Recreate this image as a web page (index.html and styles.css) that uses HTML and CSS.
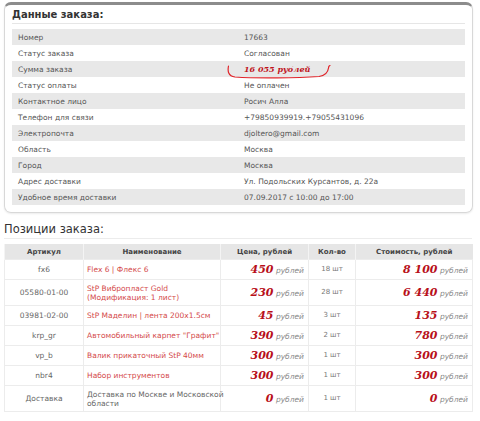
FILE: index.html
```html
<!DOCTYPE html>
<html lang="ru">
<head>
<meta charset="utf-8">
<link rel="stylesheet" href="styles.css">
</head>
<body>
<section class="order-box">
  <h2 class="box-title">Данные заказа:</h2>
  <div class="info">
    <div class="row"><span class="lbl">Номер</span><span class="val">17663</span></div>
    <div class="row"><span class="lbl">Статус заказа</span><span class="val">Согласован</span></div>
    <div class="row"><span class="lbl">Сумма заказа</span><span class="val sum">16 055 рублей
      <svg class="scribble" width="110" height="16" viewBox="0 0 110 16"><path d="M1.5 1 C 0.5 6, 1 11, 8 12 C 30 13.5, 70 13, 92 11.5 C 99 10.5, 101 7, 101.5 3 C 101.5 1.5, 102 0.8, 103 0.5" fill="none" stroke="#e0242a" stroke-width="1.2" stroke-linecap="round"/></svg>
    </span></div>
    <div class="row"><span class="lbl">Статус оплаты</span><span class="val">Не оплачен</span></div>
    <div class="row"><span class="lbl">Контактное лицо</span><span class="val">Росич Алла</span></div>
    <div class="row"><span class="lbl">Телефон для связи</span><span class="val">+79850939919.+79055431096</span></div>
    <div class="row"><span class="lbl">Электропочта</span><span class="val">djoltero@gmail.com</span></div>
    <div class="row"><span class="lbl">Область</span><span class="val">Москва</span></div>
    <div class="row"><span class="lbl">Город</span><span class="val">Москва</span></div>
    <div class="row"><span class="lbl">Адрес доставки</span><span class="val">Ул. Подольских Курсантов, д. 22а</span></div>
    <div class="row"><span class="lbl">Удобное время доставки</span><span class="val">07.09.2017 с 10:00 до 17:00</span></div>
  </div>
</section>

<h2 class="items-title">Позиции заказа:</h2>
<table class="items">
  <colgroup><col class="c1"><col class="c2"><col class="c3"><col class="c4"><col class="c5"></colgroup>
  <thead>
    <tr><th>Артикул</th><th>Наименование</th><th>Цена, рублей</th><th>Кол-во</th><th>Стоимость, рублей</th></tr>
  </thead>
  <tbody>
    <tr><td class="sku">fx6</td><td class="name">Flex 6 | Флекс 6</td><td class="price"><b>450</b> <i>рублей</i></td><td class="qty">18 шт</td><td class="price"><b>8 100</b> <i>рублей</i></td></tr>
    <tr class="tall"><td class="sku">05580-01-00</td><td class="name">StP Вибропласт Gold<br>(Модификация: 1 лист)</td><td class="price"><b>230</b> <i>рублей</i></td><td class="qty">28 шт</td><td class="price"><b>6 440</b> <i>рублей</i></td></tr>
    <tr><td class="sku">03981-02-00</td><td class="name">StP Маделин | лента 200x1.5см</td><td class="price"><b>45</b> <i>рублей</i></td><td class="qty">3 шт</td><td class="price"><b>135</b> <i>рублей</i></td></tr>
    <tr><td class="sku">krp_gr</td><td class="name">Автомобильный карпет "Графит"</td><td class="price"><b>390</b> <i>рублей</i></td><td class="qty">2 шт</td><td class="price"><b>780</b> <i>рублей</i></td></tr>
    <tr><td class="sku">vp_b</td><td class="name">Валик прикаточный StP 40мм</td><td class="price"><b>300</b> <i>рублей</i></td><td class="qty">1 шт</td><td class="price"><b>300</b> <i>рублей</i></td></tr>
    <tr><td class="sku">nbr4</td><td class="name">Набор инструментов</td><td class="price"><b>300</b> <i>рублей</i></td><td class="qty">1 шт</td><td class="price"><b>300</b> <i>рублей</i></td></tr>
    <tr class="tall"><td class="sku">Доставка</td><td class="name plain">Доставка по Москве и Московской<br>области</td><td class="price"><b>0</b> <i>рублей</i></td><td class="qty">1 шт</td><td class="price"><b>0</b> <i>рублей</i></td></tr>
  </tbody>
</table>
</body>
</html>
```

FILE: styles.css
```css
html, body {
  margin: 0;
  padding: 0;
  background: #fff;
}
body {
  padding: 2px 0 0 4px;
  font-family: "DejaVu Sans", Verdana, sans-serif;
  font-size: 7.5px;
  color: #555;
}
.order-box {
  width: 453px;
  border: 1px solid #d8d8d8;
  border-top: 3px solid #8c8c8c;
  border-radius: 7px;
  padding: 0 7px 7px 7px;
  box-shadow: 0 1px 2px rgba(0,0,0,0.08);
}
.box-title {
  margin: 0;
  padding: 3px 0 2px 0;
  font-size: 10px;
  font-weight: bold;
  color: #333;
  border-bottom: 1px solid #e6e6e6;
  margin-bottom: 5px;
  line-height: 13px;
}
.info .row {
  display: grid;
  grid-template-columns: 232px 1fr;
  height: 16px;
  align-items: center;
}
.info .row:nth-child(odd) {
  background: #e8e8e8;
}
.lbl { padding-left: 6px; }
.val { position: relative; }
.sum {
  color: #c0141c;
  font-family: "DejaVu Serif", Georgia, serif;
  font-weight: bold;
  font-style: italic;
  font-size: 8px;
}
.scribble {
  position: absolute;
  left: -17px;
  top: 1px;
}
.items-title {
  margin: 0;
  padding: 9px 0 2px 0;
  font-size: 11.5px;
  font-weight: normal;
  color: #333;
  line-height: 14px;
  width: 468px;
  border-bottom: 1px solid #ececec;
  margin-bottom: 5px;
}
.items {
  border-collapse: collapse;
  width: 468px;
  table-layout: fixed;
}
.c1 { width: 79px; }
.c2 { width: 137px; }
.c3 { width: 88px; }
.c4 { width: 47px; }
.c5 { width: 117px; }
.items th {
  background: #e6e6e6;
  font-weight: bold;
  color: #444;
  font-size: 7px;
  height: 15px;
  padding: 0;
  border-left: 1px solid #f4f4f4;
}
.items td {
  border: 1px solid #ececec;
  height: 19px;
  padding: 0 4px;
  vertical-align: middle;
  line-height: 9px;
}
.items tr.tall td { height: 25px; }
.sku { text-align: center; color: #666; }
.name { color: #d44a4a; padding-left: 3px !important; white-space: nowrap; }
.name.plain { color: #666; }
.qty { text-align: center; color: #777; font-size: 7px; }
.price { text-align: right; white-space: nowrap; }
.price b {
  font-family: "DejaVu Serif", Georgia, serif;
  font-style: italic;
  font-weight: bold;
  font-size: 11px;
  color: #b8101a;
}
.price i {
  color: #888;
  font-size: 7.5px;
}
```
